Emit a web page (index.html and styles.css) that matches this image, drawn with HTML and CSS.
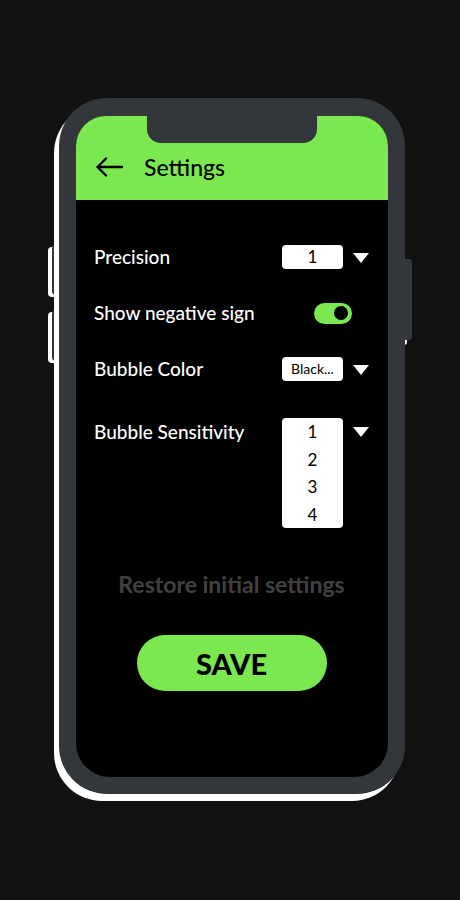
FILE: index.html
```html
<!DOCTYPE html>
<html lang="en">
<head>
    <meta charset="UTF-8">
    <meta name="viewport" content="width=device-width, initial-scale=1.0">
    <title>Settings</title>
    <link rel="stylesheet" href="styles.css">
</head>
<body>
    <div class="phone">
        <div class="side-button left-top"></div>
        <div class="side-button left-bottom"></div>
        <div class="side-button right"></div>

        <div class="screen">
            <div class="notch"></div>

            <div class="header">
                <svg class="back-arrow" width="28" height="20" viewBox="0 0 28 20">
                    <path d="M27 10 H2.5 M11 1.5 L2.5 10 L11 18.5" fill="none" stroke="#000" stroke-width="2.4" stroke-linecap="round" stroke-linejoin="round"/>
                </svg>
                <h1>Settings</h1>
            </div>

            <div class="content">
                <div class="row">
                    <span class="label">Precision</span>
                    <div class="select-group">
                        <div class="select-box">1</div>
                        <span class="caret"></span>
                    </div>
                </div>

                <div class="row">
                    <span class="label">Show negative sign</span>
                    <div class="toggle"><span class="knob"></span></div>
                </div>

                <div class="row">
                    <span class="label">Bubble Color</span>
                    <div class="select-group">
                        <div class="select-box small">Black...</div>
                        <span class="caret"></span>
                    </div>
                </div>

                <div class="row open">
                    <span class="label">Bubble Sensitivity</span>
                    <div class="select-group">
                        <ul class="select-list">
                            <li>1</li>
                            <li>2</li>
                            <li>3</li>
                            <li>4</li>
                        </ul>
                        <span class="caret"></span>
                    </div>
                </div>

                <button class="restore-button">Restore initial settings</button>
                <button class="save-button">SAVE</button>
            </div>
        </div>
    </div>
</body>
</html>
```

FILE: styles.css
```css
body {
    margin: 0;
    background-color: #111111;
    font-family: Lato, "Open Sans", sans-serif;
    width: 460px;
    height: 900px;
    overflow: hidden;
}
.phone {
    position: relative;
    width: 312px;
    height: 661px;
    margin: 98px 0 0 59px;
    padding: 18px 17px 17px 17px;
    background-color: #33363b;
    border-radius: 48px;
    box-shadow: -5px 7px 0 #ffffff;
}
.side-button {
    position: absolute;
    width: 8px;
    background-color: #33363b;
    z-index: -1;
}
.left-top {
    left: -7px;
    top: 147px;
    height: 50px;
    border-radius: 4px 0 0 4px;
    box-shadow: -4px 2px 0 #ffffff;
}
.left-bottom {
    left: -7px;
    top: 212px;
    height: 51px;
    border-radius: 4px 0 0 4px;
    box-shadow: -4px 2px 0 #ffffff;
}
.right {
    right: -7px;
    top: 161px;
    height: 81px;
    border-radius: 0 3px 3px 0;
    box-shadow: -5px 5px 0 #ffffff;
}
.screen {
    position: relative;
    height: 100%;
    background-color: #000000;
    border-radius: 30px 30px 34px 34px;
    overflow: hidden;
    display: flex;
    flex-direction: column;
}
.notch {
    position: absolute;
    top: 0;
    left: 71px;
    width: 170px;
    height: 27px;
    background-color: #33363b;
    border-radius: 0 0 14px 14px;
}
.header {
    height: 84px;
    box-sizing: border-box;
    padding: 17px 0 0 19px;
    background-color: #7be84f;
    display: flex;
    align-items: center;
    gap: 21px;
}
.header h1 {
    margin: 0;
    font-size: 23px;
    font-weight: 500;
    color: #000000;
}
.back-arrow {
    display: block;
}
.content {
    padding: 45px 19px 0 18px;
    display: flex;
    flex-direction: column;
}
.row {
    height: 24px;
    display: flex;
    align-items: center;
    justify-content: space-between;
    margin-bottom: 32px;
}
.row.open {
    height: auto;
    align-items: flex-start;
    margin-top: 5px;
    margin-bottom: 0;
}
.label {
    color: #ffffff;
    font-size: 19px;
    font-weight: 500;
    line-height: 28px;
}
.select-group {
    display: flex;
    align-items: flex-start;
    gap: 10px;
}
.select-box {
    width: 61px;
    height: 24px;
    background: #ffffff;
    border-radius: 4px;
    color: #000000;
    font-size: 17px;
    line-height: 24px;
    text-align: center;
}
.select-box.small {
    font-size: 14px;
}
.caret {
    width: 0;
    height: 0;
    margin-top: 8px;
    border-left: 8px solid transparent;
    border-right: 8px solid transparent;
    border-top: 10px solid #ffffff;
}
.open .caret {
    margin-top: 9px;
}
.select-list {
    list-style: none;
    margin: 0;
    padding: 0;
    width: 61px;
    background: #ffffff;
    border-radius: 4px;
}
.select-list li {
    height: 27.5px;
    line-height: 27.5px;
    text-align: center;
    font-size: 17px;
    color: #000000;
}
.toggle {
    position: relative;
    width: 38px;
    height: 21px;
    margin-right: 17px;
    background-color: #7be84f;
    border-radius: 11px;
}
.knob {
    position: absolute;
    right: 4px;
    top: 3.5px;
    width: 14px;
    height: 14px;
    border-radius: 50%;
    background-color: #000000;
}
.restore-button {
    align-self: center;
    margin-top: 42px;
    padding: 0;
    background: none;
    border: none;
    font-family: inherit;
    font-size: 23px;
    font-weight: 700;
    line-height: 28px;
    color: #414141;
}
.save-button {
    align-self: center;
    width: 190px;
    height: 56px;
    margin-top: 37px;
    background-color: #7be84f;
    border: none;
    border-radius: 28px;
    font-family: inherit;
    font-size: 29px;
    font-weight: 900;
    color: #000000;
}
```
